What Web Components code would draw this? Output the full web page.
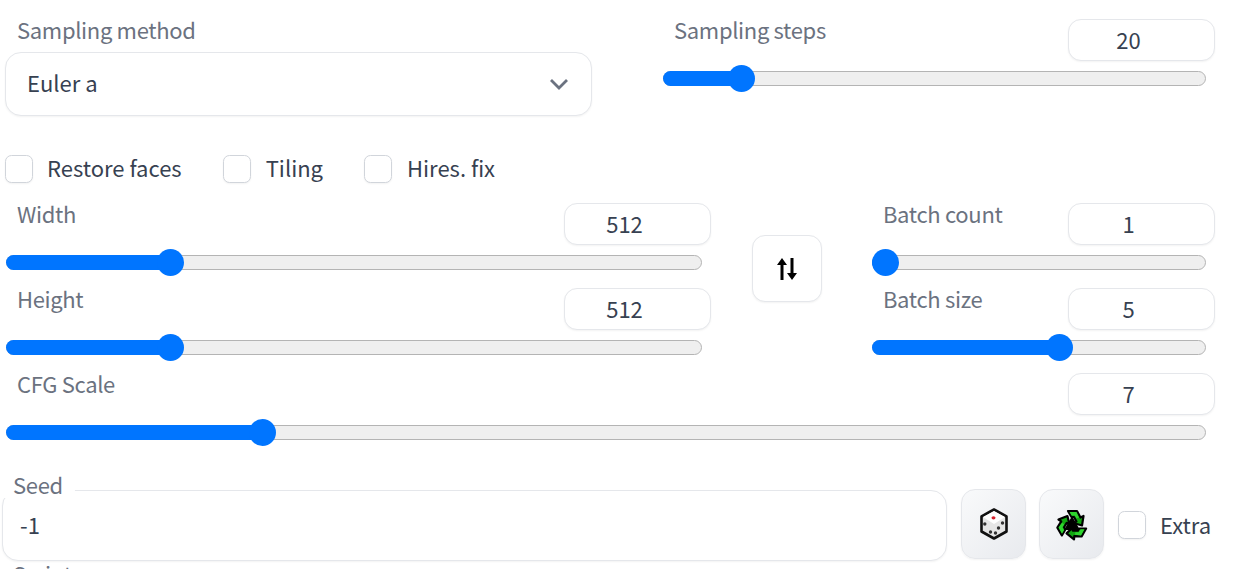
<!DOCTYPE html>
<html>
<head>
<meta charset="utf-8">
<title>txt2img settings</title>
<style>
  html, body { margin: 0; padding: 0; background: #fff; overflow: hidden; }
  body { font-family: "Noto Sans CJK SC", "Noto Sans", sans-serif; font-size: 22px; color: #374151; }
  .page { width: 1239px; height: 569px; overflow: hidden; display: flex; flex-direction: column; }
  .row { display: flex; flex: none; }
  .top { height: 127px; padding-left: 5px; }
  .top sd-dropdown { width: 587px; }
  .top sd-slider { width: 552px; margin-left: 71px; margin-top: 19px; --w: 543px; --lp: 11px; }
  .checks { height: 28px; padding-left: 5px; gap: 41px; margin-top: 28px; }
  .dims { padding-left: 5px; height: 170px; margin-top: 20px; }
  .dims .col { display: flex; flex-direction: column; }
  .dims .left { width: 706px; }
  .dims .right { width: 343px; --lp: 11px; }
  .swap { width: 161px; display: flex; justify-content: center; padding: 32px 10px 0 0; box-sizing: border-box; }
  .cfg { padding-left: 5px; height: 117px; }
  .seed { padding-left: 2px; align-items: flex-start; height: 71px; }
  .foot { flex: none; color: #6b7280; padding-left: 13px; line-height: 28px; margin-top: -2px; letter-spacing: -.3px; }
</style>
</head>
<body>
<template id="slider-tpl">
  <style>
    :host { display: block; height: 86px; color: #6b7280; --w: 698px; }
    .head { display: flex; justify-content: space-between; align-items: flex-start; height: 44px; }
    label { padding-left: var(--lp, 12px); line-height: 28px; margin-top: -4px; white-space: nowrap; letter-spacing: -.33px; }
    .num { width: 147px; height: 42px; box-sizing: border-box; padding: 0 26px 2px 0; border: 1px solid #e5e7eb; border-radius: 13px;
      background: #fff; color: #374151; display: flex; align-items: center; justify-content: center;
      box-shadow: 0 1px 2px rgba(0,0,0,.05); }
    .track { position: relative; width: var(--w); margin-left: var(--tl, 0); height: 15px; box-sizing: border-box; margin-top: 8px;
      background: #efefef; border: 1px solid #b4b4b4; border-radius: 8px; }
    .fill { position: absolute; left: -1px; top: -1px; height: 15px; background: #0075ff; border-radius: 8px 0 0 8px; }
    .thumb { position: absolute; top: -7px; width: 27px; height: 27px; border-radius: 50%; background: #0075ff; }
  </style>
  <div class="head"><label><slot></slot></label><div class="num"></div></div>
  <div class="track"><div class="fill"></div><div class="thumb"></div></div>
</template>

<template id="check-tpl">
  <style>
    :host { display: inline-flex; align-items: center; height: 28px; color: #374151; }
    .box { width: 28px; height: 28px; box-sizing: border-box; border: 1px solid #d1d5db; border-radius: 6.5px; background: #fff;
      box-shadow: 0 1px 2px rgba(0,0,0,.05); margin-right: var(--tx, 14px); flex: none; }
    .txt { padding-bottom: var(--tb, 4px); }
  </style>
  <span class="box"></span><span class="txt"><slot></slot></span>
</template>

<template id="drop-tpl">
  <style>
    :host { display: block; color: #6b7280; }
    label { display: block; padding-left: 12px; line-height: 28px; margin: 15px 0 9px; letter-spacing: -.33px; }
    .sel { height: 64px; box-sizing: border-box; border: 1px solid #e5e7eb; border-radius: 16px; background: #fff;
      display: flex; align-items: center; justify-content: space-between; padding: 0 22px 5px 21px; color: #374151;
      box-shadow: 0 1px 2px rgba(0,0,0,.05); }
    svg { display: block; margin-top: 5px; }
  </style>
  <label><slot name="label"></slot></label>
  <div class="sel"><slot></slot>
    <svg width="20" height="14" viewBox="0 0 20 14"><path d="M2 3l8 8 8-8" fill="none" stroke="#6b7280" stroke-width="2.800"/></svg>
  </div>
</template>

<template id="btn-tpl">
  <style>
    :host { display: flex; flex: none; align-items: center; justify-content: center; box-sizing: border-box; width: 70px; height: 67px;
      border: 1px solid #e5e7eb; border-radius: 13px; background: #fff; box-shadow: 0 1px 2px rgba(0,0,0,.05); }
    :host([tool]) { width: 65px; height: 70px; margin-top: -1px; border-radius: 14px; background: linear-gradient(to bottom right, #f9fafb, #e8eaee); }
    ::slotted(svg) { display: block; }
  </style>
  <slot></slot>
</template>

<template id="seed-tpl">
  <style>
    :host { display: block; flex: none; position: relative; width: 945px; height: 71px; box-sizing: border-box; margin-right: 14px;
      border: 1px solid #e5e7eb; border-radius: 16px; background: #fff; box-shadow: 0 1px 2px rgba(0,0,0,.05); color: #374151; }
    .lbl { position: absolute; left: -2px; top: -21px; padding: 0 12px; background: #fff; color: #6b7280; line-height: 28px; border-radius: 0 0 8px 0; letter-spacing: -.3px; }
    .val { padding-left: 17px; line-height: 67px; }
  </style>
  <span class="lbl"><slot name="label"></slot></span>
  <div class="val"><slot></slot></div>
</template>

<div class="page">
  <div class="row top">
    <sd-dropdown><span slot="label">Sampling method</span>Euler a</sd-dropdown>
    <sd-slider value="20" fill="78">Sampling steps</sd-slider>
  </div>
  <div class="row checks">
    <sd-check>Restore faces</sd-check>
    <sd-check style="--tx:15px">Tiling</sd-check>
    <sd-check style="--tx:15px">Hires. fix</sd-check>
  </div>
  <div class="row dims">
    <div class="col left">
      <sd-slider value="512" fill="164" style="--w:696px;--tl:1px">Width</sd-slider>
      <sd-slider value="512" fill="164" style="--w:696px;--tl:1px">Height</sd-slider>
    </div>
    <div class="swap">
      <sd-button>
        <svg width="22" height="22" viewBox="0 0 22 22"><path d="M4.500 22V7H1L6 0l5 7H7.500v15zM14.500 0v15H11l5 7 5-7h-3.500V0z" fill="#000"/></svg>
      </sd-button>
    </div>
    <div class="col right">
      <sd-slider value="1" fill="13" style="--w:334px">Batch count</sd-slider>
      <sd-slider value="5" fill="187" style="--w:334px">Batch size</sd-slider>
    </div>
  </div>
  <div class="row cfg">
    <sd-slider value="7" fill="256" style="width:1210px;--w:1200px;--tl:1px">CFG Scale</sd-slider>
  </div>
  <div class="row seed">
    <sd-seed><span slot="label">Seed</span>-1</sd-seed>
    <sd-button tool>
      <svg width="28" height="32" viewBox="0 0 28 32">
        <path d="M14 1.500l12.500 7v15L14 30.500l-12.500-7v-15z" fill="#e6e6e6" stroke="#111" stroke-width="2.600" stroke-linejoin="round"/>
        <path d="M14 3l11 6-11 7-11-7z" fill="#fff"/>
        <ellipse cx="13.500" cy="9.800" rx="2" ry="1.600" fill="#d6202c"/>
        <circle cx="4.800" cy="16" r="1.700" fill="#333"/><circle cx="10.500" cy="24" r="1.700" fill="#333"/>
        <circle cx="22.500" cy="15" r="1.700" fill="#333"/><circle cx="18.500" cy="20" r="1.700" fill="#333"/><circle cx="15.500" cy="25" r="1.700" fill="#333"/>
      </svg>
    </sd-button>
    <sd-button tool style="margin-left:13px">
      <svg width="32" height="34" viewBox="0 0 32 34">
        <defs>
          <g id="rc">
            <path d="M12 4H21L24.500 10.500L27.500 9L26 18.500L17.500 16L20.500 14.500L18 10H15.500z" fill="#12a612" stroke="#000" stroke-width="2.200" stroke-linejoin="round"/>
            <path d="M13.500 5H20.500L23 10.500L20.500 11.500L18.800 8.500H15.500z" fill="#2fd42f"/>
          </g>
        </defs>
        <path d="M16 9L24 23H8z" fill="#000"/>
        <use href="#rc"/>
        <use href="#rc" transform="rotate(120 16 18)"/>
        <use href="#rc" transform="rotate(240 16 18)"/>
      </svg>
    </sd-button>
    <sd-check style="margin:21px 0 0 14px;--tb:3px">Extra</sd-check>
  </div>
  <div class="foot">Script</div>
</div>

<script>
function fromTemplate(el, id) {
  el.attachShadow({ mode: 'open' });
  el.shadowRoot.appendChild(document.getElementById(id).content.cloneNode(true));
}
class SdSlider extends HTMLElement {
  constructor() { super(); fromTemplate(this, 'slider-tpl'); }
  connectedCallback() {
    const fill = Number(this.getAttribute('fill'));
    this.shadowRoot.querySelector('.num').textContent = this.getAttribute('value');
    this.shadowRoot.querySelector('.fill').style.width = fill + 'px';
    this.shadowRoot.querySelector('.thumb').style.left = (fill - 14.5) + 'px';
  }
}
class SdCheck extends HTMLElement { constructor() { super(); fromTemplate(this, 'check-tpl'); } }
class SdDropdown extends HTMLElement { constructor() { super(); fromTemplate(this, 'drop-tpl'); } }
class SdButton extends HTMLElement { constructor() { super(); fromTemplate(this, 'btn-tpl'); } }
class SdSeed extends HTMLElement { constructor() { super(); fromTemplate(this, 'seed-tpl'); } }
customElements.define('sd-slider', SdSlider);
customElements.define('sd-check', SdCheck);
customElements.define('sd-dropdown', SdDropdown);
customElements.define('sd-button', SdButton);
customElements.define('sd-seed', SdSeed);
</script>
</body>
</html>
